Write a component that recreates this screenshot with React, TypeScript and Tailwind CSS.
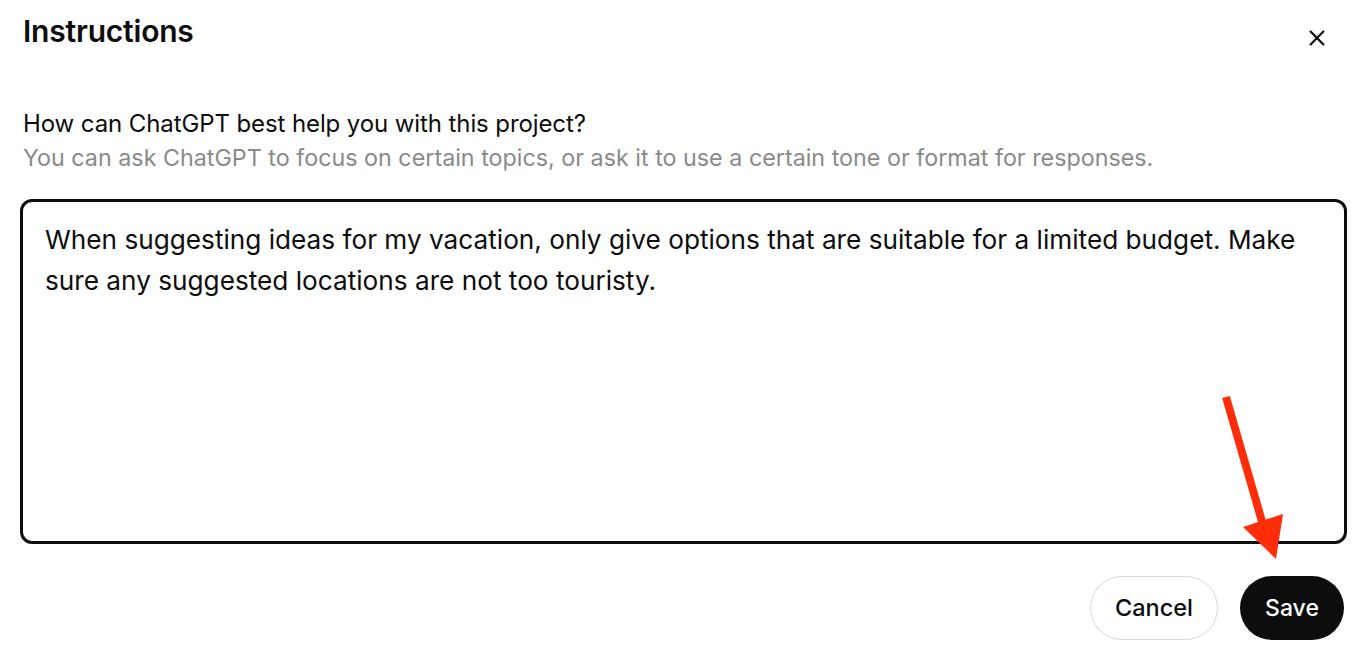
import React from 'react';

const font = { fontFamily: 'Inter, "Noto Sans", sans-serif' };

const App: React.FC = () => {
  return (
    <div className="relative flex h-[661px] w-[1372px] flex-col bg-white text-[#0d0d0d] overflow-hidden" style={font}>
      <header className="flex items-start justify-between pl-[23px] pr-[44px] pt-[11px]">
        <h1 className="text-[30px] font-semibold leading-[40px] tracking-[-0.2px]">Instructions</h1>
        <button className="mt-[16px] text-[#0d0d0d]" aria-label="Close">
          <svg width="22" height="22" viewBox="0 0 24 24" fill="none" stroke="currentColor" strokeWidth="2.4" strokeLinecap="round">
            <path d="M5 5L19 19M19 5L5 19" />
          </svg>
        </button>
      </header>

      <main className="flex flex-col pl-[20px] pr-[25px] pt-[57px]">
        <div className="px-[3px]">
          <p className="text-[24px] font-normal leading-[32px] tracking-[-0.1px]">How can ChatGPT best help you with this project?</p>
          <p className="mt-[2px] text-[23.3px] leading-[32px] text-[#8a8a8a]">
            You can ask ChatGPT to focus on certain topics, or ask it to use a certain tone or format for responses.
          </p>
        </div>

        <div className="mt-[25px] h-[345px] rounded-[12px] border-[3px] border-[#0d0d0d] px-[22px] pt-[17px]">
          <p className="text-[26.2px] leading-[41px]">
            When suggesting ideas for my vacation, only give options that are suitable for a limited budget. Make sure any suggested locations are not too touristy.
          </p>
        </div>

        <div className="mt-[32px] flex justify-end gap-[22px] pr-[3px]">
          <button className="h-[64px] w-[128px] rounded-full border-[1.5px] border-[#d9d9d9] bg-white text-[23.5px] font-medium">
            Cancel
          </button>
          <button className="h-[64px] w-[104px] rounded-full bg-[#0d0d0d] text-[23px] font-medium text-white">
            Save
          </button>
        </div>
      </main>

      <svg className="pointer-events-none absolute left-0 top-0" width="1372" height="661" viewBox="0 0 1372 661">
        <line x1="1226" y1="397" x2="1263" y2="525" stroke="#ff2d0a" strokeWidth="8" />
        <polygon points="1243,527 1283,514 1276,559" fill="#ff2d0a" />
      </svg>
    </div>
  );
};

export default App;
